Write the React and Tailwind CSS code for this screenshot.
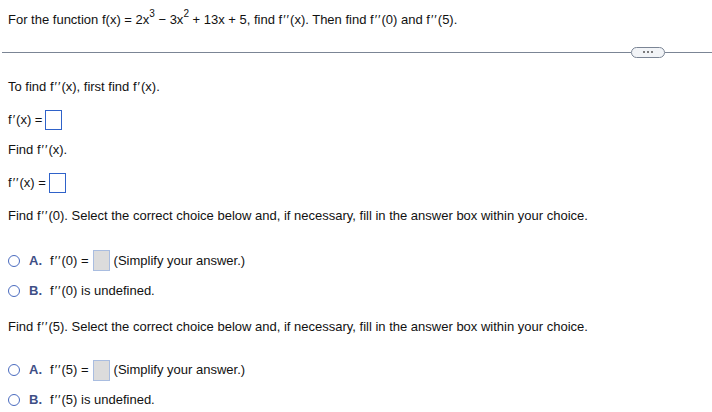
const Box = ({ gray }) => (
  <span
    className={
      gray
        ? 'inline-block align-middle w-[17px] h-[21px] bg-[#dcdcdc] border border-[#a9bde0] mx-[4px]'
        : 'inline-block align-middle w-[17px] h-[20px] bg-white border border-[#2f62c9] ml-[3px]'
    }
  />
);

// primes drawn a bit wider than the font's own
const P = ({ n = 2 }) => (
  <span className="inline-block ml-[1px] tracking-[1px]">{n === 2 ? '′′' : '′'}</span>
);

const Radio = () => (
  <span className="inline-block w-[12px] h-[12px] rounded-full border border-[#4a6bbf] bg-white mr-[9px]" />
);

function Choice({ letter, children }) {
  return (
    <div className="flex items-center h-[30px]">
      <Radio />
      <span className="font-bold text-[#3f4f86] w-[21px]">{letter}.</span>
      {children}
    </div>
  );
}

export default function App() {
  return (
    <div className="w-[712px] h-[412px] overflow-hidden bg-white text-[#111] text-[13px] font-['Liberation_Sans',Arial,sans-serif]">
      <div className="px-[8px] pt-[10px] h-[40px]">
        For the function f(x) = 2x<sup className="text-[10px] -top-[0.7em]">3</sup> − 3x<sup className="text-[10px] -top-[0.7em]">2</sup> + 13x + 5, find f<P />(x). Then find f<P />(0) and f<P />(5).
      </div>

      <div className="flex items-center h-[24px]">
        <div className="flex-1 h-px bg-[#7b8595] ml-[2px]" />
        <button className="w-[34px] h-[11px] rounded-full border border-[#7b8595] bg-[#f2f4f7] flex items-center justify-center gap-[2px]">
          <span className="w-[2px] h-[2px] bg-[#555] rounded-full" />
          <span className="w-[2px] h-[2px] bg-[#555] rounded-full" />
          <span className="w-[2px] h-[2px] bg-[#555] rounded-full" />
        </button>
        <div className="w-[47px] h-px bg-[#7b8595]" />
      </div>

      <div className="px-[8px]">
        <div className="mt-[13px]">To find f<P />(x), first find f<P n={1} />(x).</div>
        <div className="mt-[13px] flex items-center">f<P n={1} />(x) =<Box /></div>
        <div className="mt-[10px]">Find f<P />(x).</div>
        <div className="mt-[14px] flex items-center">f<P />(x) =<Box /></div>
        <div className="mt-[13px]">Find f<P />(0). Select the correct choice below and, if necessary, fill in the answer box within your choice.</div>
        <div className="mt-[20px]">
          <Choice letter="A">f<P />(0) =<Box gray /><span>(Simplify your answer.)</span></Choice>
          <Choice letter="B">f<P />(0) is undefined.</Choice>
        </div>
        <div className="mt-[11px]">Find f<P />(5). Select the correct choice below and, if necessary, fill in the answer box within your choice.</div>
        <div className="mt-[19px]">
          <Choice letter="A">f<P />(5) =<Box gray /><span>(Simplify your answer.)</span></Choice>
          <Choice letter="B">f<P />(5) is undefined.</Choice>
        </div>
      </div>
    </div>
  );
}
